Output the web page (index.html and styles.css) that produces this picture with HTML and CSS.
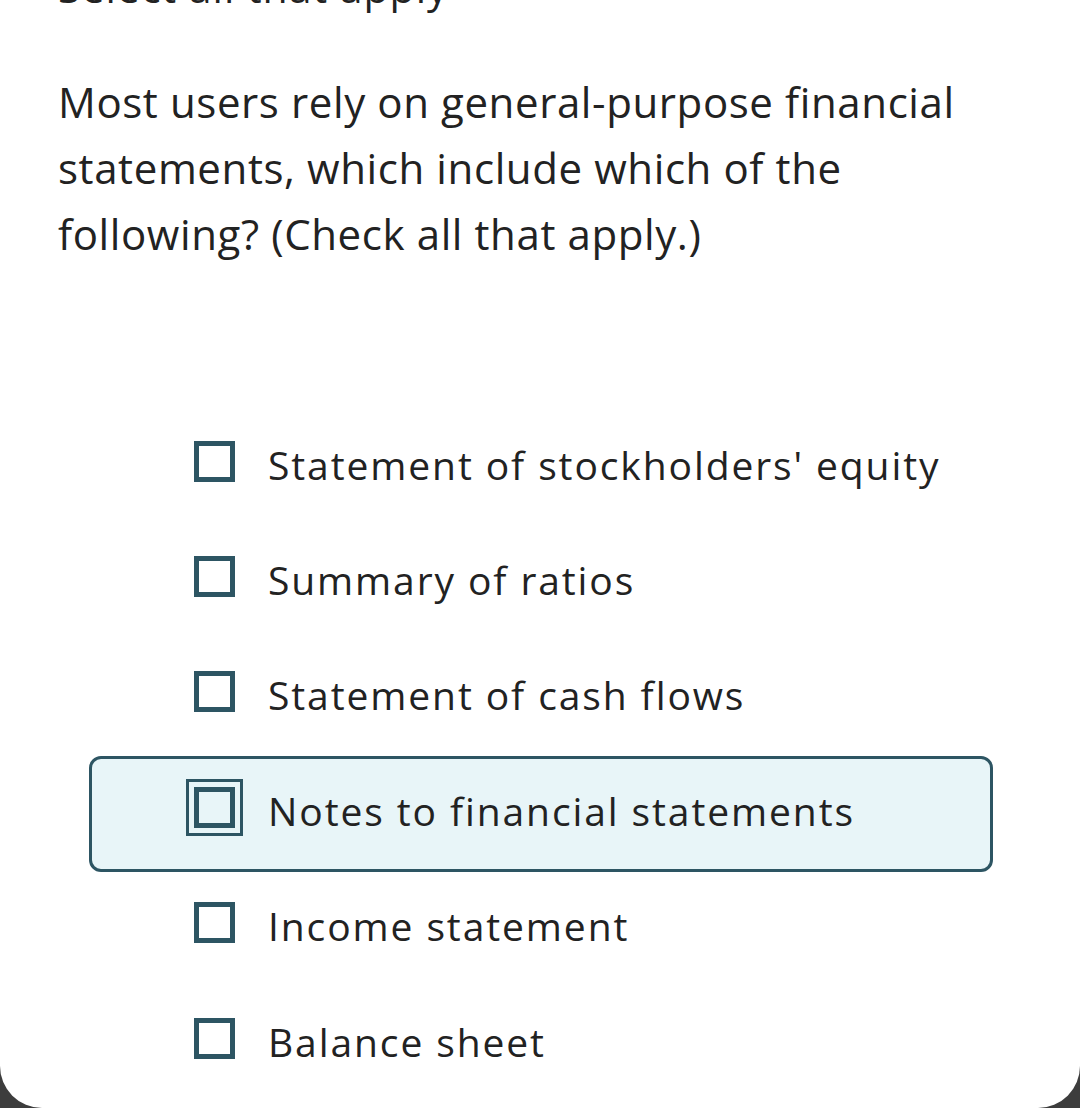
FILE: index.html
```html
<!DOCTYPE html>
<html>
<head>
<meta charset="utf-8">
<link rel="stylesheet" href="styles.css">
</head>
<body>
<div class="card">
  <div class="prompt">Select all that apply</div>
  <p class="question">Most users rely on general-purpose financial statements, which include which of the following? (Check all that apply.)</p>
  <div class="options">
    <label class="option"><span class="box"></span><span class="text">Statement of stockholders' equity</span></label>
    <label class="option"><span class="box"></span><span class="text">Summary of ratios</span></label>
    <label class="option"><span class="box"></span><span class="text">Statement of cash flows</span></label>
    <label class="option focused"><span class="box"></span><span class="text">Notes to financial statements</span></label>
    <label class="option"><span class="box"></span><span class="text">Income statement</span></label>
    <label class="option"><span class="box"></span><span class="text">Balance sheet</span></label>
  </div>
</div>
</body>
</html>
```

FILE: styles.css
```css
html, body {
  margin: 0;
  padding: 0;
  background: #3d3d3d;
}
body {
  width: 1080px;
  height: 1108px;
  overflow: hidden;
}
.card {
  display: flow-root;
  background: #ffffff;
  height: 1108px;
  border-radius: 0 0 42px 42px;
  font-family: "Open Sans", "Liberation Sans", sans-serif;
  font-variant-ligatures: none;
  color: #222222;
  box-sizing: border-box;
  padding: 0 0 0 58px;
}
.prompt {
  font-size: 41px;
  letter-spacing: 1px;
  line-height: 46px;
  margin-top: -36px;
  height: 46px;
}
.question {
  margin: 59px 0 0 0;
  font-size: 42px;
  letter-spacing: 0.6px;
  line-height: 66px;
  width: 920px;
}
.options {
  margin-top: 143px;
  margin-left: 31px;
  width: 904px;
}
.option {
  display: flex;
  align-items: center;
  height: 115.4px;
  box-sizing: border-box;
  padding-left: 102px;
  padding-bottom: 7px;
  border: 3px solid transparent;
  border-radius: 12px;
}
.option.focused {
  background: #e8f5f8;
  border-color: #2d5563;
}
.box {
  width: 41px;
  height: 41px;
  box-sizing: border-box;
  border: 5px solid #2d5563;
  flex: none;
  margin-bottom: 6px;
}
.focused .box {
  outline: 3px solid #2d5563;
  outline-offset: 5px;
}
.text {
  margin-left: 33px;
  font-size: 39px;
  letter-spacing: 1.9px;
  color: #222222;
}
```
